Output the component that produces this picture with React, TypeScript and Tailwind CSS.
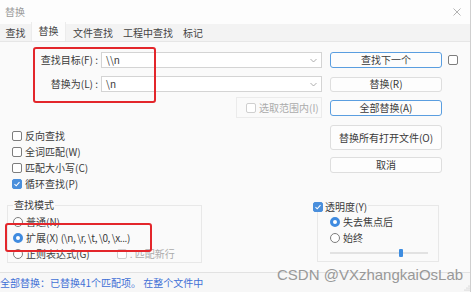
import React from "react";

const Check = ({ checked = false, disabled = false }: { checked?: boolean; disabled?: boolean }) =>
  checked ? (
    <span className="inline-flex w-[10px] h-[10px] shrink-0 items-center justify-center rounded-[2px] bg-[#4a8fdc] border border-[#4a8fdc]">
      <svg width="8" height="8" viewBox="0 0 8 8">
        <polyline points="1.5,4.2 3.2,5.8 6.5,2.2" fill="none" stroke="#fff" strokeWidth="1.1" />
      </svg>
    </span>
  ) : (
    <span
      className={
        "inline-block w-[10px] h-[10px] shrink-0 rounded-[2px] bg-white border " +
        (disabled ? "border-[#cfcfcf]" : "border-[#7d7d7d]")
      }
    />
  );

const Radio = ({ on = false }: { on?: boolean }) =>
  on ? (
    <span className="inline-block w-[10px] h-[10px] shrink-0 rounded-full bg-white border-[3px] border-[#3f8be0]" />
  ) : (
    <span className="inline-block w-[10px] h-[10px] shrink-0 rounded-full bg-white border border-[#7d7d7d]" />
  );

const Btn = ({ label, focus = false, h = "h-[16px]" }: { label: string; focus?: boolean; h?: string }) => (
  <div
    className={
      "w-[112px] flex items-center justify-center rounded-[3px] bg-[#fdfdfd] text-[#3a3a3a] " +
      h +
      " " +
      (focus ? "border border-[#5a9ee0]" : "border border-[#dedede]")
    }
  >
    {label}
  </div>
);

const Field = ({ value }: { value: string }) => (
  <div className="w-[221px] h-[16px] bg-white border border-[#d4d4d4] flex items-center justify-between pl-[4px] pr-[4px] text-[#3a3a3a]">
    <span>{value}</span>
    <svg width="7" height="5" viewBox="0 0 7 5">
      <polyline points="0.5,1 3.5,4 6.5,1" fill="none" stroke="#9a9a9a" strokeWidth="0.8" />
    </svg>
  </div>
);

export default function App() {
  return (
    <div
      className="relative w-[474px] h-[292px] overflow-hidden bg-white text-[10px] leading-none"
      style={{ fontFamily: '"Noto Sans CJK SC", "Noto Sans", sans-serif' }}
    >
      <div className="w-[471px] h-full flex flex-col bg-[#fafafa] border-r border-[#cfcfcf]">
        {/* title */}
        <div className="h-[24px] flex items-center justify-between pl-[5px] pr-[9px] bg-[#fdfdfd] text-[#9a9a9a]">
          <span>替换</span>
          <svg width="8" height="8" viewBox="0 0 8 8">
            <path d="M0.5 0.5 L7.5 7.5 M7.5 0.5 L0.5 7.5" stroke="#a0a0a0" strokeWidth="0.8" />
          </svg>
        </div>
        {/* tabs */}
        <div className="h-[18px] flex items-stretch bg-[#f3f3f3] border-b border-[#e6e6e6] text-[#444]">
          <div className="w-[31px] flex items-center justify-center">查找</div>
          <div className="w-[35px] flex items-center justify-center bg-[#fcfcfc] -mt-[2px] pb-[2px] border-x border-[#ececec]">
            替换
          </div>
          <div className="w-[54px] flex items-center justify-center">文件查找</div>
          <div className="w-[56px] flex items-center justify-center">工程中查找</div>
          <div className="w-[34px] flex items-center justify-center">标记</div>
        </div>
        {/* content */}
        <div className="flex-1 flex flex-col text-[#3a3a3a]">
          <div className="mt-[10px] flex items-center h-[16px]">
            <div className="w-[98px] text-right">查找目标(F) :</div>
            <div className="ml-[3px]">
              <Field value={"\\\\n"} />
            </div>
            <div className="ml-[8px]">
              <Btn label="查找下一个" focus />
            </div>
            <div className="ml-[6px] flex">
              <Check />
            </div>
          </div>
          <div className="mt-[8px] flex items-center h-[16px]">
            <div className="w-[98px] text-right">替换为(L) :</div>
            <div className="ml-[3px]">
              <Field value={"\\n"} />
            </div>
            <div className="ml-[8px]">
              <Btn label="替换(R)" h="h-[15px]" />
            </div>
          </div>
          <div className="mt-[5px] flex items-center h-[21px]">
            <div className="ml-[236px] w-[86px] h-[21px] border border-[#ebebeb] flex items-center pl-[9px] gap-[3px] text-[#ababab]">
              <Check disabled />
              <span>选取范围内(I)</span>
            </div>
            <div className="ml-[8px]">
              <Btn label="全部替换(A)" focus />
            </div>
          </div>
          <div className="flex">
            <div className="w-[330px] pl-[12px] pt-[10px] flex flex-col">
              {[
                ["反向查找", false],
                ["全词匹配(W)", false],
                ["匹配大小写(C)", false],
                ["循环查找(P)", true],
              ].map(([t, c]) => (
                <div key={t as string} className="h-[16px] flex items-center gap-[3px]">
                  <Check checked={c as boolean} />
                  <span>{t as string}</span>
                </div>
              ))}
            </div>
            <div className="pt-[7px] flex flex-col gap-[7px]">
              <Btn label="替换所有打开文件(O)" h="h-[25px]" />
              <Btn label="取消" />
            </div>
          </div>
          <div className="mt-[13px] flex">
            <div className="ml-[7px] w-[195px] h-[58px] border border-[#e8e8e8] relative pl-[5px] pt-[8px] flex flex-col">
              <span className="absolute left-[5px] -top-[6px] px-[1px] bg-[#fafafa]">查找模式</span>
              <div className="h-[16px] flex items-center gap-[3px]">
                <Radio />
                <span>普通(N)</span>
              </div>
              <div className="h-[16px] flex items-center gap-[3px]">
                <Radio on />
                <span>
                  扩展(X) <span className="tracking-[-0.4px]">(\n, \r, \t, \0, \x...)</span>
                </span>
              </div>
              <div className="h-[16px] flex items-center">
                <Radio />
                <span className="ml-[3px]">正则表达式(G)</span>
                <span className="ml-[27px] flex items-center gap-[3px] text-[#ababab]">
                  <Check disabled />
                  <span>. 匹配新行</span>
                </span>
              </div>
            </div>
            <div className="ml-[115px] w-[122px] h-[57px] border border-[#e8e8e8] relative pl-[12px] pt-[8px] flex flex-col">
              <span className="absolute -left-[5px] -top-[4px] flex items-center gap-[2px] bg-[#fafafa] pr-[1px]">
                <Check checked />
                <span>透明度(Y)</span>
              </span>
              <div className="h-[16px] flex items-center gap-[3px]">
                <Radio on />
                <span>失去焦点后</span>
              </div>
              <div className="h-[16px] flex items-center gap-[3px]">
                <Radio />
                <span>始终</span>
              </div>
              <div className="relative mt-[6px] w-[98px] h-[2px] bg-[#e2e2e2]">
                <span className="absolute left-[69px] -top-[3px] w-[4px] h-[8px] rounded-[1px] bg-[#3d8ce0]" />
              </div>
            </div>
          </div>
        </div>
        {/* status */}
        <div className="h-[20px] border-t border-[#e2e2e2] flex items-center text-[#4170d6] bg-[#f7f7f7]">
          <span>全部替换：已替换41个匹配项。 在整个文件中</span>
        </div>
      </div>
      {/* annotations */}
      <div className="absolute left-[33px] top-[47px] w-[123px] h-[56px] border-2 border-[#e3262b] rounded-[3px]" />
      <div className="absolute left-[5px] top-[223px] w-[147px] h-[29px] border-2 border-[#e3262b] rounded-[3px]" />
      <div
        className="absolute left-[277px] top-[267px] text-[15px] leading-none text-[#999999]"
        style={{ fontFamily: '"Liberation Sans", Arial, sans-serif' }}
      >
        CSDN @VXzhangkaiOsLab
      </div>
      <svg className="absolute right-[4px] bottom-[1px]" width="6" height="6" viewBox="0 0 6 6">
        <circle cx="5" cy="1" r="0.6" fill="#bbb" />
        <circle cx="3" cy="3" r="0.6" fill="#bbb" />
        <circle cx="5" cy="3" r="0.6" fill="#bbb" />
        <circle cx="1" cy="5" r="0.6" fill="#bbb" />
        <circle cx="3" cy="5" r="0.6" fill="#bbb" />
        <circle cx="5" cy="5" r="0.6" fill="#bbb" />
      </svg>
    </div>
  );
}
